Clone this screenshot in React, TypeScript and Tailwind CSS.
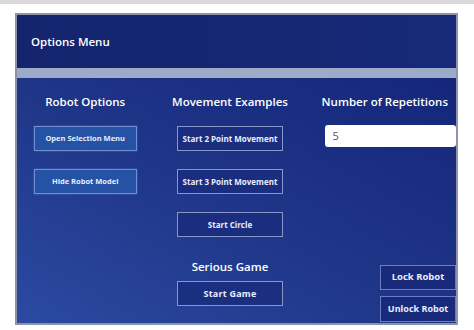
const font = { fontFamily: '"Open Sans", "Noto Sans", sans-serif' };

function OutlineButton({ label, light = false }: { label: string; light?: boolean }) {
  return (
    <button
      className={
        light
          ? "flex h-[25px] w-[103px] items-center justify-center whitespace-nowrap border border-[#6f8fd2] bg-[#2552a5] text-[7.5px] font-bold text-[#e8eefc] shadow-[0_0_2px_rgba(120,150,230,0.5)]"
          : "flex h-[25px] w-[106px] items-center justify-center whitespace-nowrap border border-[#8797cc] bg-[#1a2d7e] text-[8px] font-bold text-[#e8eefc]"
      }
    >
      {label}
    </button>
  );
}

export default function App() {
  return (
    <div className="h-[330px] w-[474px] overflow-hidden bg-white" style={font}>
      <div className="h-[4px] bg-[#d9d9d9]" />
      <div className="ml-[15px] mt-[9px] w-[443px]">
        <div className="flex h-[55px] items-center border-2 border-b-0 border-[#8d93a8] bg-gradient-to-r from-[#14246d] to-[#172a78] pl-[14px]">
          <span className="text-[11.5px] font-semibold text-white">Options Menu</span>
        </div>
        <div className="h-[10px] border-x-2 border-[#8d93a8] bg-[#9babc8]" />
        <div className="flex h-[247px] border-2 border-t-0 border-[#8d93a8] bg-gradient-to-tr from-[#2b4aa1] via-[#1f3587] to-[#15267a] pt-[15px]">
          {/* Robot options */}
          <div className="flex w-[137px] flex-col items-center">
            <h2 className="whitespace-nowrap text-[11.5px] font-semibold leading-[18px] text-white">Robot Options</h2>
            <div className="mt-[15px] flex flex-col gap-[18px]">
              <OutlineButton light label="Open Selection Menu" />
              <OutlineButton light label="Hide Robot Model" />
            </div>
          </div>

          {/* Movement examples */}
          <div className="flex w-[154px] flex-col items-center">
            <h2 className="whitespace-nowrap text-[11.5px] font-semibold leading-[18px] text-white">Movement Examples</h2>
            <div className="mt-[15px] flex flex-col gap-[18px]">
              <OutlineButton label="Start 2 Point Movement" />
              <OutlineButton label="Start 3 Point Movement" />
              <OutlineButton label="Start Circle" />
            </div>
            <h2 className="mt-[21px] whitespace-nowrap text-[11.5px] font-semibold leading-[18px] text-white">Serious Game</h2>
            <button className="mt-[5px] flex h-[25px] w-[106px] items-center justify-center border border-[#8797cc] bg-[#1b2f80] text-[9px] font-bold tracking-wide text-[#e8eefc]">
              Start Game
            </button>
          </div>

          {/* Repetitions */}
          <div className="flex flex-1 flex-col pl-[15px]">
            <h2 className="mr-[8px] whitespace-nowrap text-center text-[11.5px] font-semibold leading-[18px] text-white">
              Number of Repetitions
            </h2>
            <div className="ml-[3px] mt-[14px] flex h-[22px] items-center rounded-[3px] bg-white pl-[8px] text-[11px] text-[#555]">
              5
            </div>
            <div className="mt-auto mb-[1px] flex flex-col items-end gap-[6px]">
              <button className="flex h-[25px] w-[76px] items-center justify-center border border-[#6a7dc2] bg-[#1a2a7a] text-[9.5px] font-bold text-[#e8eefc]">
                Lock Robot
              </button>
              <button className="flex h-[26px] w-[76px] items-center justify-center border border-[#6a7dc2] bg-[#1a2a7a] text-[9px] font-bold text-[#e8eefc]">
                Unlock Robot
              </button>
            </div>
          </div>
        </div>
      </div>
    </div>
  );
}
